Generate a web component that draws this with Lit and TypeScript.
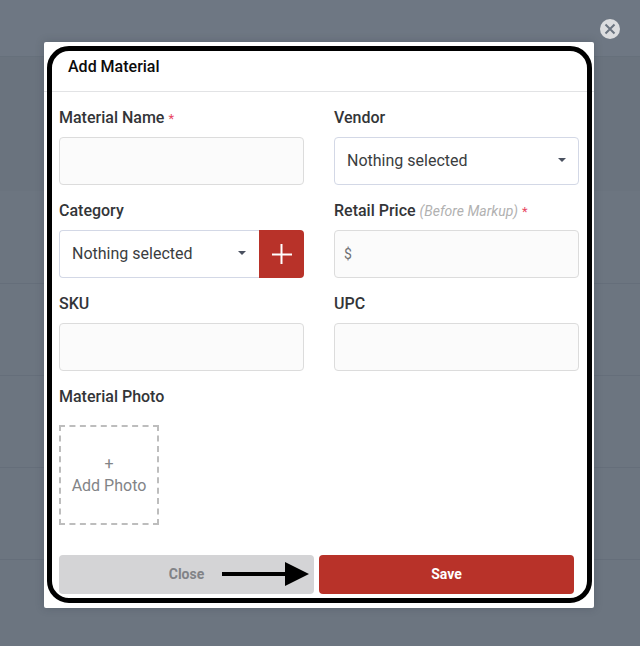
import { LitElement, html, css } from 'lit';
import { customElement } from 'lit/decorators.js';

@customElement('form-field')
class FormField extends LitElement {
  static properties = {
    label: { type: String },
    hint: { type: String },
    required: { type: Boolean },
  };

  label = '';
  hint = '';
  required = false;

  static styles = css`
    :host {
      display: flex;
      flex-direction: column;
      gap: 9px;
      min-width: 0;
    }
    .label {
      height: 20px;
      font-size: 16px;
      line-height: 20px;
      font-weight: 500;
      color: #333538;
      white-space: nowrap;
    }
    .hint {
      font-size: 14px;
      font-style: italic;
      font-weight: 400;
      color: #b1b1b1;
    }
    .req {
      font-size: 13px;
      font-weight: 400;
      color: #e8475f;
    }
  `;

  render() {
    return html`
      <div class="label">${this.label}${this.hint ? html` <span class="hint">${this.hint}</span>` : ''}${this.required ? html` <span class="req">*</span>` : ''}</div>
      <slot></slot>
    `;
  }
}

@customElement('app-root')
class AppRoot extends LitElement {
  static styles = css`
    :host {
      display: block;
      position: relative;
      width: 640px;
      height: 646px;
      overflow: hidden;
      background: #6e7783;
      font-family: Roboto, "Liberation Sans", sans-serif;
    }
    .rows {
      display: flex;
      flex-direction: column;
      padding-top: 56px;
    }
    .rows div {
      border-top: 1px solid #656e7a;
      box-sizing: border-box;
      height: 92px;
      background: #6c7580;
    }
    .rows .first {
      height: 134px;
      background: #6a737e;
      border-top-color: #66707b;
    }
    .rows .second {
      height: 93px;
      border-top-color: #6a737e;
    }
    .close-x {
      position: absolute;
      left: 600px;
      top: 19px;
      width: 20px;
      height: 20px;
      border-radius: 50%;
      background: #dcdddf;
      display: flex;
      align-items: center;
      justify-content: center;
    }
    .modal {
      position: absolute;
      left: 44px;
      top: 42px;
      width: 550px;
      height: 566px;
      background: #fff;
      border-radius: 2px;
      box-shadow: 0 0 8px rgba(40, 48, 58, 0.25);
      box-sizing: border-box;
      display: flex;
      flex-direction: column;
    }
    .frame {
      position: absolute;
      left: 3px;
      top: 4px;
      width: 545px;
      height: 557px;
      box-sizing: border-box;
      border: 5px solid #000;
      border-radius: 22px;
      pointer-events: none;
    }
    .head {
      height: 50px;
      box-sizing: border-box;
      border-bottom: 1px solid #e2e3e5;
      padding: 15px 0 0 24px;
      font-size: 16px;
      line-height: 20px;
      font-weight: 500;
      color: #0c0c0c;
    }
    .body {
      padding: 16px 15px 0;
      display: grid;
      grid-template-columns: 245px 245px;
      column-gap: 30px;
      row-gap: 16px;
    }
    .input,
    .select {
      height: 48px;
      box-sizing: border-box;
      border-radius: 4px;
      font-size: 16px;
      display: flex;
      align-items: center;
    }
    .input {
      border: 1px solid #dcdcdc;
      background: #fbfbfb;
      padding: 0 9px;
      color: #6f7174;
      font-size: 14px;
    }
    .select {
      border: 1px solid #d3d8e6;
      background: #fff;
      padding: 0 12px 2px;
      color: #3a3d40;
      justify-content: space-between;
    }
    .caret {
      width: 0;
      height: 0;
      border-left: 4px solid transparent;
      border-right: 4px solid transparent;
      border-top: 4px solid #4a5160;
    }
    .group {
      display: flex;
    }
    .group .select {
      flex: 1;
      border-radius: 4px 0 0 4px;
      border-right: none;
      padding-right: 13px;
    }
    .add {
      width: 45px;
      height: 48px;
      background: #b83229;
      border-radius: 0 4px 4px 0;
      display: flex;
      align-items: center;
      justify-content: center;
    }
    .photo {
      width: 100px;
      height: 100px;
      box-sizing: border-box;
      border: 2px dashed #bdbdbd;
      color: #828487;
      font-size: 16px;
      line-height: 22px;
      text-align: center;
      display: flex;
      flex-direction: column;
      justify-content: center;
    }
    .photo-field {
      grid-column: 1 / 3;
    }
    .photo-field form-field {
      gap: 18px;
    }
    .foot {
      margin-top: auto;
      padding: 0 20px 14px 15px;
      display: grid;
      grid-template-columns: 255px 255px;
      column-gap: 5px;
    }
    .btn {
      height: 39px;
      box-sizing: border-box;
      padding-bottom: 2px;
      border-radius: 4px;
      font-size: 14px;
      font-weight: 700;
      display: flex;
      align-items: center;
      justify-content: center;
    }
    .btn.close {
      background: #d4d4d6;
      color: #818387;
    }
    .btn.save {
      background: #b83229;
      color: #fff;
    }
    .arrow {
      position: absolute;
      left: 178px;
      top: 519px;
    }
  `;

  render() {
    return html`
      <div class="rows">
        <div class="first"></div>
        <div class="second"></div>
        <div></div>
        <div></div>
        <div></div>
        <div></div>
      </div>
      <div class="close-x">
        <svg width="12" height="12" viewBox="0 0 12 12"><path d="M1.5 1.5l9 9M10.5 1.5l-9 9" stroke="#6c7581" stroke-width="2" fill="none"/></svg>
      </div>
      <div class="modal">
        <div class="head">Add Material</div>
        <div class="body">
          <form-field label="Material Name" required><div class="input"></div></form-field>
          <form-field label="Vendor">
            <div class="select">Nothing selected<span class="caret"></span></div>
          </form-field>
          <form-field label="Category">
            <div class="group">
              <div class="select">Nothing selected<span class="caret"></span></div>
              <div class="add">
                <svg width="20" height="20" viewBox="0 0 20 20"><path d="M9.5 0v20M0 10.5h20" stroke="#fff" stroke-width="2" fill="none"/></svg>
              </div>
            </div>
          </form-field>
          <form-field label="Retail Price" hint="(Before Markup)" required><div class="input">$</div></form-field>
          <form-field label="SKU"><div class="input"></div></form-field>
          <form-field label="UPC"><div class="input"></div></form-field>
          <div class="photo-field">
            <form-field label="Material Photo">
              <div class="photo"><span>+</span><span>Add Photo</span></div>
            </form-field>
          </div>
        </div>
        <div class="foot">
          <div class="btn close">Close</div>
          <div class="btn save">Save</div>
        </div>
        <div class="frame"></div>
        <svg class="arrow" width="88" height="26" viewBox="0 0 88 26"><path d="M0 11h63V1l24 12-24 12V15H0z" fill="#000"/></svg>
      </div>
    `;
  }
}
